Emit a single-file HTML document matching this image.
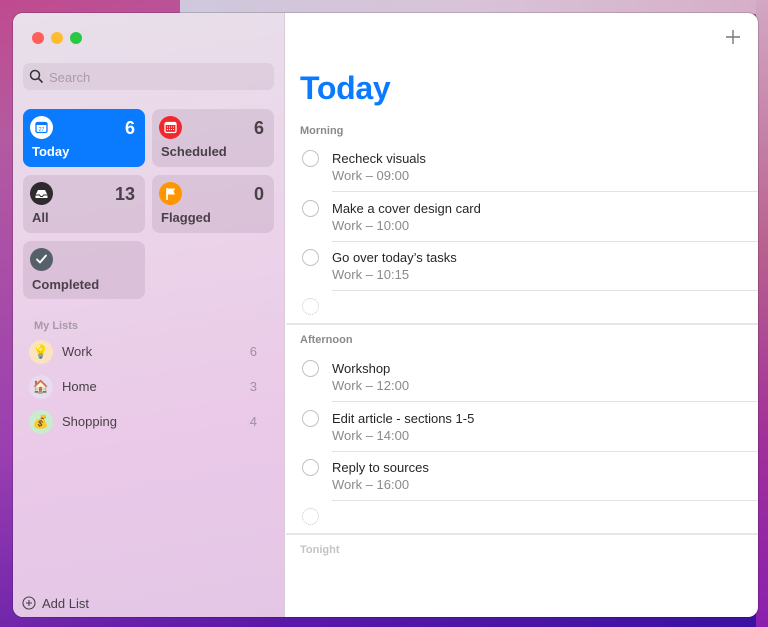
<!DOCTYPE html>
<html><head><meta charset="utf-8"><style>
*{margin:0;padding:0;box-sizing:border-box}
body{width:768px;height:627px;overflow:hidden;position:relative;font-family:"Liberation Sans",sans-serif;
background:linear-gradient(160deg,#c04a8e 0%,#b45aa0 15%,#9a3fb0 50%,#5a18a8 80%,#3a10a0 100%);}
.bgr{position:absolute;left:180px;top:0;width:588px;height:14px;background:linear-gradient(90deg,#cfc8dc,#d8c3d8,#d6aec6)}
.bgr2{position:absolute;right:0;top:0;width:12px;height:627px;background:linear-gradient(180deg,#d3a8c4,#b8608f 40%,#a2309a 70%,#8a20b0)}
.win{position:absolute;left:13px;top:13px;width:745px;height:604px;border-radius:10px;overflow:hidden;background:#fff;box-shadow:0 0 0 1px rgba(0,0,0,.15)}
.side{position:absolute;left:0;top:0;width:272px;height:604px;background:linear-gradient(170deg,#e8e0ea 0%,#ebd3e9 40%,#eac9e8 70%,#e3c6e6 100%);border-right:1px solid #d9cbd9}
.a{position:absolute}
.dot{position:absolute;top:19px;width:12px;height:12px;border-radius:50%}
.tile{position:absolute;width:122px;height:58px;border-radius:8px;background:rgba(160,130,160,.22)}
.tile .ic{position:absolute;left:7px;top:7px;width:23px;height:23px;border-radius:50%}
.tile .n{position:absolute;right:10px;top:9px;font-size:18px;font-weight:bold;color:#4a4048}
.tile .l{position:absolute;left:9px;top:35px;font-size:13px;font-weight:bold;color:#4a4048}
.li{position:absolute;left:16px;width:228px;height:24px}
.li .c{position:absolute;left:0;top:0;width:24px;height:24px;border-radius:50%;font-size:13px;text-align:center;line-height:24px}
.li .t{position:absolute;left:33px;top:4px;font-size:13px;color:#4a4048}
.li .k{position:absolute;right:0;top:4px;font-size:13px;color:#a090a0}
.main{position:absolute;left:273px;top:0;right:0;bottom:0}
.sec{position:absolute;left:14px;font-size:11px;font-weight:bold;color:#8a8a8a}
.row{position:absolute;left:0;right:0;height:50px}
.row .cb{position:absolute;left:16px;top:-8px;width:17px;height:17px;border:1.3px solid #c2c2c2;border-radius:50%}
.row .t{position:absolute;left:46px;top:-7px;font-size:13px;color:#262626}
.row .s{position:absolute;left:46px;top:10px;font-size:13px;color:#8a8a8a}
.row .ln{position:absolute;left:46px;right:0;top:33px;height:1px;background:#e2e2e2}
.empty{position:absolute;left:16px;width:17px;height:17px;border:1.3px dotted #c8c8c8;border-radius:50%}
.hl{position:absolute;left:0;right:0;height:2px;background:#e6e6e6}
</style></head><body>
<div class="bgr"></div><div class="bgr2"></div>
<div class="win">
<div class="side">
<div class="dot" style="left:19px;background:#fe5f57"></div>
<div class="dot" style="left:38px;background:#febc2e"></div>
<div class="dot" style="left:57px;background:#28c840"></div>
<div class="a" style="left:10px;top:50px;width:251px;height:27px;border-radius:7px;background:rgba(180,160,180,.22)"></div>
<svg class="a" style="left:16px;top:56px" width="15" height="15" viewBox="0 0 15 15"><circle cx="6" cy="6" r="4.5" fill="none" stroke="#333" stroke-width="1.5"/><path d="M9.3 9.3L13 13" stroke="#333" stroke-width="1.6" stroke-linecap="round"/></svg>
<div class="a" style="left:36px;top:57px;font-size:13px;color:#a89ca8">Search</div>

<div class="tile" style="left:10px;top:96px;background:#0a7aff">
<div class="ic" style="background:#fff"><svg width="23" height="23" viewBox="0 0 23 23"><rect x="6" y="6.5" width="11" height="10" rx="1.5" fill="none" stroke="#0a7aff" stroke-width="1.3"/><rect x="6" y="6.5" width="11" height="2.5" fill="#0a7aff"/><text x="11.5" y="15" font-size="5" text-anchor="middle" fill="#0a7aff" font-family="Liberation Sans">27</text></svg></div>
<div class="n" style="color:#fff">6</div><div class="l" style="color:#fff">Today</div></div>
<div class="tile" style="left:139px;top:96px">
<div class="ic" style="background:#f2272c"><svg width="23" height="23" viewBox="0 0 23 23"><rect x="6" y="6.5" width="11" height="10" rx="1.5" fill="none" stroke="#fff" stroke-width="1.3"/><rect x="6" y="6.5" width="11" height="2.5" fill="#fff"/><path d="M8 11h7M8 13.5h7" stroke="#fff" stroke-width="1" stroke-dasharray="1 1"/></svg></div>
<div class="n">6</div><div class="l">Scheduled</div></div>
<div class="tile" style="left:10px;top:162px">
<div class="ic" style="background:#2e2a2e"><svg width="23" height="23" viewBox="0 0 23 23"><path d="M5.5 13l2.5-5h7l2.5 5v3h-12z" fill="#fff"/><path d="M5.5 13h4l1 1.5h2l1-1.5h4" fill="none" stroke="#2e2a2e" stroke-width="1"/></svg></div>
<div class="n">13</div><div class="l">All</div></div>
<div class="tile" style="left:139px;top:162px">
<div class="ic" style="background:#ff9500"><svg width="23" height="23" viewBox="0 0 23 23"><path d="M8 6v12" stroke="#fff" stroke-width="1.6"/><path d="M8 6.5h8l-1.5 3 1.5 3h-8z" fill="#fff"/></svg></div>
<div class="n">0</div><div class="l">Flagged</div></div>
<div class="tile" style="left:10px;top:228px">
<div class="ic" style="background:#56606a"><svg width="23" height="23" viewBox="0 0 23 23"><path d="M7 11.5l3 3 6-7" fill="none" stroke="#fff" stroke-width="1.8" stroke-linecap="round" stroke-linejoin="round"/></svg></div>
<div class="l" style="top:36px">Completed</div></div>

<div class="a" style="left:21px;top:307px;font-size:11px;font-weight:bold;color:#a898a8">My Lists</div>
<div class="li" style="top:327px"><div class="c" style="background:#fbe3c2">💡</div><div class="t">Work</div><div class="k">6</div></div>
<div class="li" style="top:362px"><div class="c" style="background:#e8daf0">🏠</div><div class="t">Home</div><div class="k">3</div></div>
<div class="li" style="top:397px"><div class="c" style="background:#c9ecd0">💰</div><div class="t">Shopping</div><div class="k">4</div></div>

<svg class="a" style="left:9px;top:583px" width="14" height="14" viewBox="0 0 14 14"><circle cx="7" cy="7" r="6" fill="none" stroke="#4a4048" stroke-width="1.1"/><path d="M7 4v6M4 7h6" stroke="#4a4048" stroke-width="1.1"/></svg>
<div class="a" style="left:29px;top:583px;font-size:13px;color:#4a4048">Add List</div>
</div>

<div class="main">
<svg class="a" style="left:440px;top:17px" width="14" height="14" viewBox="0 0 14 14"><path d="M7 0v14M0 7h14" stroke="#777" stroke-width="1.4"/></svg>
<div class="a" style="left:14px;top:57px;font-size:32px;font-weight:bold;color:#0a7aff;letter-spacing:-0.3px">Today</div>
<div class="sec" style="top:112px">Morning</div>
<div class="row" style="top:145px"><div class="cb"></div><div class="t">Recheck visuals</div><div class="s">Work – 09:00</div><div class="ln"></div></div>
<div class="row" style="top:195px"><div class="cb"></div><div class="t">Make a cover design card</div><div class="s">Work – 10:00</div><div class="ln"></div></div>
<div class="row" style="top:244px"><div class="cb"></div><div class="t">Go over today’s tasks</div><div class="s">Work – 10:15</div><div class="ln"></div></div>
<div class="empty" style="top:285px"></div>
<div class="hl" style="top:310px"></div>
<div class="sec" style="top:321px">Afternoon</div>
<div class="row" style="top:355px"><div class="cb"></div><div class="t">Workshop</div><div class="s">Work – 12:00</div><div class="ln"></div></div>
<div class="row" style="top:405px"><div class="cb"></div><div class="t">Edit article - sections 1-5</div><div class="s">Work – 14:00</div><div class="ln"></div></div>
<div class="row" style="top:454px"><div class="cb"></div><div class="t">Reply to sources</div><div class="s">Work – 16:00</div><div class="ln"></div></div>
<div class="empty" style="top:495px"></div>
<div class="hl" style="top:520px"></div>
<div class="sec" style="top:531px;color:#c4c4c4">Tonight</div>
</div>
</div>
</body></html>
